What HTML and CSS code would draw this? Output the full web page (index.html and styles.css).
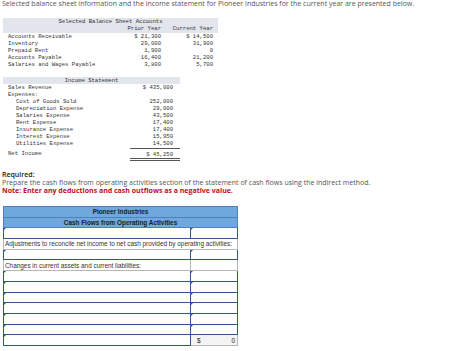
FILE: index.html
```html
<!DOCTYPE html>
<html>
<head>
<meta charset="utf-8">
<link rel="stylesheet" href="styles.css">
</head>
<body>
<p class="intro">Selected balance sheet information and the income statement for Pioneer Industries for the current year are presented below.</p>

<div class="mono bs">
  <div class="band">
    <div class="title">Selected Balance Sheet Accounts</div>
    <div class="row"><span></span><span class="num">Prior Year</span><span class="num">Current Year</span></div>
  </div>
  <div class="row"><span>Accounts Receivable</span><span class="num">$ 21,300</span><span class="num">$ 14,500</span></div>
  <div class="row"><span>Inventory</span><span class="num">29,000</span><span class="num">31,900</span></div>
  <div class="row"><span>Prepaid Rent</span><span class="num">1,900</span><span class="num">0</span></div>
  <div class="row"><span>Accounts Payable</span><span class="num">16,400</span><span class="num">21,200</span></div>
  <div class="row"><span>Salaries and Wages Payable</span><span class="num">3,800</span><span class="num">5,700</span></div>
</div>

<div class="mono is">
  <div class="band"><div class="title">Income Statement</div></div>
  <div class="row"><span>Sales Revenue</span><span class="num">$ 435,000</span></div>
  <div class="row"><span>Expenses:</span><span class="num"></span></div>
  <div class="row"><span class="ind">Cost of Goods Sold</span><span class="num">252,000</span></div>
  <div class="row"><span class="ind">Depreciation Expense</span><span class="num">29,000</span></div>
  <div class="row"><span class="ind">Salaries Expense</span><span class="num">43,500</span></div>
  <div class="row"><span class="ind">Rent Expense</span><span class="num">17,400</span></div>
  <div class="row"><span class="ind">Insurance Expense</span><span class="num">17,400</span></div>
  <div class="row"><span class="ind">Interest Expense</span><span class="num">15,950</span></div>
  <div class="row"><span class="ind">Utilities Expense</span><span class="num">14,500</span></div>
  <div class="row net"><span>Net Income</span><span class="num total">$ 45,250</span></div>
</div>

<div class="req">
  <p class="req-h">Required:</p>
  <p>Prepare the cash flows from operating activities section of the statement of cash flows using the indirect method.</p>
  <p class="note">Note: Enter any deductions and cash outflows as a negative value.</p>
</div>

<table class="cf">
  <colgroup><col class="c1"><col class="c2"></colgroup>
  <tr><th colspan="2">Pioneer Industries</th></tr>
  <tr><th colspan="2">Cash Flows from Operating Activities</th></tr>
  <tr><td class="in"><i></i></td><td class="in"><i></i></td></tr>
  <tr><td colspan="2" class="lbl">Adjustments to reconcile net income to net cash provided by operating activities:</td></tr>
  <tr><td class="in"><i></i></td><td class="in"><i></i></td></tr>
  <tr><td class="lbl">Changes in current assets and current liabilities:</td><td></td></tr>
  <tr><td class="in"><i></i></td><td class="in"><i></i></td></tr>
  <tr><td class="in"><i></i></td><td class="in"><i></i></td></tr>
  <tr><td class="in"><i></i></td><td class="in"><i></i></td></tr>
  <tr><td class="in"><i></i></td><td class="in"><i></i></td></tr>
  <tr><td class="in"><i></i></td><td class="in"><i></i></td></tr>
  <tr><td class="in"><i></i></td><td class="in"><i></i></td></tr>
  <tr><td class="in"><i></i></td><td class="tot"><span>$</span><span>0</span></td></tr>
</table>
</body>
</html>
```

FILE: styles.css
```css
html, body { margin: 0; padding: 0; background: #fff; }
body { font-family: "Open Sans", "Liberation Sans", sans-serif; color: #555; }
p { margin: 0; }

.intro { font-size: 7px; line-height: 8px; padding-left: 2px; color: #555; }

.mono { font-family: "Liberation Mono", "DejaVu Sans Mono", monospace; font-size: 5.6px; color: #333; }
.mono .row { display: grid; height: 7px; line-height: 7px; white-space: pre; }
.mono .band { background: #e2e5ec; }
.mono .title { text-align: center; height: 7px; line-height: 7px; }
.mono .num { text-align: right; }

.bs { width: 215px; margin: 10px 0 0 3px; }
.bs .row { grid-template-columns: 1fr 50px 52px; padding-left: 5px; }
.bs .row .num { padding-right: 5px; }
.bs .band { padding-bottom: 1px; }

.is { width: 177px; margin: 9px 0 0 3px; }
.is .row { grid-template-columns: 1fr 50px; padding-left: 5px; }
.is .row .num { padding-right: 7px; }
.is .ind { padding-left: 8px; }
.is .net { height: 11px; }
.is .net span { padding-top: 3px; line-height: 7px; }
.is .total { border-top: 1px solid #555; border-bottom: 3px double #555; height: 7px; padding-top: 2px !important; margin-top: 1px; }

.req { margin-top: 13px; padding-left: 2px; font-size: 7px; line-height: 8px; color: #555; }
.req-h { color: #222; font-weight: 600; }
.note { color: #b5121b; font-weight: 700; }

.cf { margin: 11px 0 0 3px; border-collapse: collapse; width: 234px; table-layout: fixed;
  font-family: "Liberation Sans", Arial, sans-serif; font-size: 6.4px; color: #222; }
.cf col.c1 { width: 187px; }
.cf col.c2 { width: 47px; }
.cf th, .cf td { height: 10.7px; padding: 0 1px; box-sizing: border-box; white-space: nowrap; }
.cf th { background: #6fa8dc; border: 1px solid #4f7fc0; font-weight: 700; text-align: center; color: #1b1b1b; }
.cf td { border: 1px solid #b7b7b7; }
.cf td.in { border: 1px solid #30588f; position: relative; }
.cf td.in i { position: absolute; left: 0; top: 0; width: 0; height: 0; border-top: 2px solid #30588f; border-right: 2px solid transparent; }
.cf td.lbl { color: #333; }
.cf td.tot { background: #f3f3f3; }
.cf td.tot span:first-child { float: left; padding-left: 5px; }
.cf td.tot span:last-child { float: right; padding-right: 1px; }
```
